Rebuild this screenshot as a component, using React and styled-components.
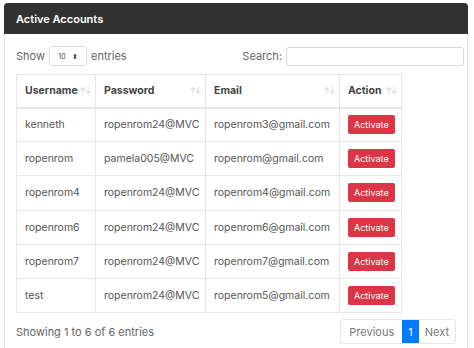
import React from 'react'
import styled, { createGlobalStyle } from 'styled-components'

const GlobalStyle = createGlobalStyle`
  body {
    margin: 0;
    background: #fff;
    font-family: 'Inter', 'Noto Sans', sans-serif;
    color: #555;
  }
`

const Card = styled.section`
  margin: 3px 6px 0 4px;
  border: 1px solid #e3e3e3;
  border-top: none;
  border-radius: 4px 4px 0 0;
  height: 400px;
`

const Header = styled.div`
  background: #323232;
  color: #fff;
  height: 31px;
  display: flex;
  align-items: center;
  padding-left: 12px;
  border-radius: 4px 4px 0 0;
  margin: 0 -1px;
  font-size: 11px;
  font-weight: 600;
`

const Body = styled.div`
  padding: 12px 3px 0 11px;
`

const Controls = styled.div`
  display: flex;
  justify-content: space-between;
  align-items: center;
  font-size: 11px;
  color: #666;
  height: 20px;
`

const Group = styled.label`
  display: flex;
  align-items: center;
  gap: 4px;
`

const Select = styled.div`
  width: 38px;
  height: 20px;
  box-sizing: border-box;
  border: 1px solid #ddd;
  border-radius: 3px;
  display: flex;
  align-items: center;
  justify-content: center;
  gap: 6px;
  font-size: 7px;
  color: #444;
`

const Input = styled.div`
  width: 178px;
  height: 19px;
  box-sizing: border-box;
  border: 1px solid #d6d6d6;
  border-radius: 3px;
`

const Table = styled.table`
  margin-top: 8px;
  width: 385px;
  border-collapse: collapse;
  font-size: 10.5px;
  color: #555;
  border: 1px solid #e6e6e6;
  table-layout: fixed;
`

const Th = styled.th`
  position: relative;
  width: ${p => p.w}px;
  height: 33px;
  box-sizing: border-box;
  text-align: left;
  padding: 0 8px;
  font-weight: 700;
  color: #444;
  border: 1px solid #e6e6e6;
  border-bottom-width: 2px;
`

const Sort = styled.span`
  position: absolute;
  right: 5px;
  top: 10px;
  font-size: 9px;
  letter-spacing: -2px;
  color: #d5d5d5;
  font-weight: 400;
`

const Td = styled.td`
  height: 34.2px;
  box-sizing: border-box;
  padding: 0 8px;
  border: 1px solid #e6e6e6;
  white-space: nowrap;
  overflow: hidden;
`

const Button = styled.span`
  display: inline-block;
  background: #dc3545;
  color: #fff;
  font-size: 9px;
  padding: 0 6px;
  height: 19px;
  line-height: 19px;
  border-radius: 2px;
`

const Footer = styled.div`
  display: flex;
  justify-content: space-between;
  align-items: center;
  margin-top: 6px;
  padding-right: 8px;
  font-size: 11px;
  color: #666;
`

const Pager = styled.div`
  display: flex;
  border: 1px solid #e6e6e6;
  border-radius: 3px;
  height: 23px;
`

const PageItem = styled.span`
  display: flex;
  align-items: center;
  padding: 0 ${p => p.pad}px;
  font-size: 11px;
  color: ${p => (p.active ? '#fff' : '#777')};
  background: ${p => (p.active ? '#007bff' : 'transparent')};
`

const rows = [
  ['kenneth', 'ropenrom24@MVC', 'ropenrom3@gmail.com'],
  ['ropenrom', 'pamela005@MVC', 'ropenrom@gmail.com'],
  ['ropenrom4', 'ropenrom24@MVC', 'ropenrom4@gmail.com'],
  ['ropenrom6', 'ropenrom24@MVC', 'ropenrom6@gmail.com'],
  ['ropenrom7', 'ropenrom24@MVC', 'ropenrom7@gmail.com'],
  ['test', 'ropenrom24@MVC', 'ropenrom5@gmail.com'],
]

const cols = [
  ['Username', 79],
  ['Password', 110],
  ['Email', 134],
  ['Action', 62],
]

const App = () => {
  return (
    <>
      <GlobalStyle />
      <Card>
        <Header>Active Accounts</Header>
        <Body>
          <Controls>
            <Group>
              Show
              <Select>10 <span>⬍</span></Select>
              entries
            </Group>
            <Group>
              Search:
              <Input />
            </Group>
          </Controls>
          <Table>
            <thead>
              <tr>
                {cols.map(([name, w]) => (
                  <Th key={name} w={w}>
                    {name}
                    <Sort>↑↓</Sort>
                  </Th>
                ))}
              </tr>
            </thead>
            <tbody>
              {rows.map(r => (
                <tr key={r[0]}>
                  <Td>{r[0]}</Td>
                  <Td>{r[1]}</Td>
                  <Td>{r[2]}</Td>
                  <Td><Button>Activate</Button></Td>
                </tr>
              ))}
            </tbody>
          </Table>
          <Footer>
            <span>Showing 1 to 6 of 6 entries</span>
            <Pager>
              <PageItem pad={8}>Previous</PageItem>
              <PageItem pad={6} active>1</PageItem>
              <PageItem pad={6}>Next</PageItem>
            </Pager>
          </Footer>
        </Body>
      </Card>
    </>
  )
}

export default App
